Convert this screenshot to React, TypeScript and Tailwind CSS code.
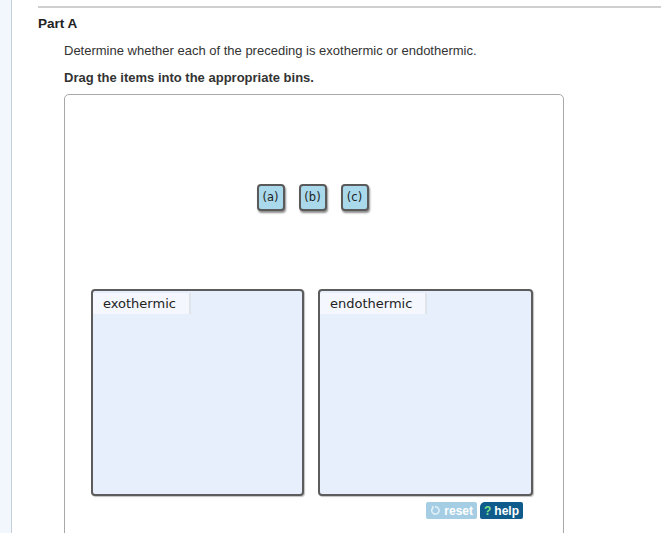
import React from 'react';

const Tile: React.FC<{ label: string }> = ({ label }) => (
  <div className="w-[28px] h-[27px] rounded-[4px] border-2 border-[#5a5a5a] bg-[#a9d9eb] shadow-[1px_2px_2px_rgba(0,0,0,0.45)] flex items-center justify-center text-[11.5px] text-[#222] [font-family:'DejaVu_Sans',sans-serif]">
    {label}
  </div>
);

const Bin: React.FC<{ label: string; width: string }> = ({ label, width }) => (
  <div className={`${width} h-[207px] rounded-[4px] border-2 border-[#5c5c5c] bg-[#e7eefc] shadow-[1px_1px_1px_rgba(0,0,0,0.25)]`}>
    <div className="inline-block bg-[#f4f7fd] border-r-2 border-[#dfe3ea] pl-[10px] pr-[13px] h-[21px] leading-[21px] text-[13px] text-[#222] [font-family:'DejaVu_Sans',sans-serif]">
      {label}
    </div>
  </div>
);

export default function App() {
  return (
    <div className="flex w-[661px] h-[533px] overflow-hidden bg-white [font-family:'Liberation_Sans',Arial,sans-serif]">
      <div className="w-[12px] shrink-0 bg-[#f2f7fe] border-r border-[#c3cedb]" />
      <div className="flex-1 pl-[26px]">
        <div className="mt-[6px] border-t-2 border-[#cfcfcf]" />
        <div className="mt-[8px] text-[13.5px] font-bold text-[#222] leading-[16px]">Part A</div>
        <div className="pl-[26px]">
          <div className="mt-[11px] text-[13px] text-[#333] leading-[15px]">
            Determine whether each of the preceding is exothermic or endothermic.
          </div>
          <div className="mt-[12px] text-[13px] font-bold text-[#333] leading-[15px]">
            Drag the items into the appropriate bins.
          </div>
          <div className="mt-[9px] w-[500px] h-[460px] rounded-[5px] border border-[#a8a8a8] bg-white">
            <div className="mt-[89px] flex justify-center gap-[14px] pr-[3px]">
              <Tile label="(a)" />
              <Tile label="(b)" />
              <Tile label="(c)" />
            </div>
            <div className="mt-[78px] ml-[26px] flex gap-[14px]">
              <Bin label="exothermic" width="w-[213px]" />
              <Bin label="endothermic" width="w-[215px]" />
            </div>
            <div className="mt-[6px] mr-[40px] flex justify-end gap-[3px]">
              <div className="h-[17px] px-[4px] flex items-center gap-[3px] rounded-[2px] bg-[#a5cde4] text-white text-[12px] font-bold">
                <svg width="11" height="11" viewBox="0 0 12 12" fill="none">
                  <path d="M3 3.2A4 4 0 1 0 6 2" stroke="#e6f3fa" strokeWidth="1.6" strokeLinecap="round" />
                  <path d="M1.5 1.5 L4 1.2 L3.6 4 Z" fill="#e6f3fa" />
                </svg>
                <span>reset</span>
              </div>
              <div className="h-[17px] px-[4px] flex items-center gap-[3px] rounded-tl-[5px] rounded-[2px] bg-[#0e5b8c] text-white text-[12px] font-bold">
                <span className="text-[#7fe08a]">?</span>
                <span>help</span>
              </div>
            </div>
          </div>
        </div>
      </div>
    </div>
  );
}
